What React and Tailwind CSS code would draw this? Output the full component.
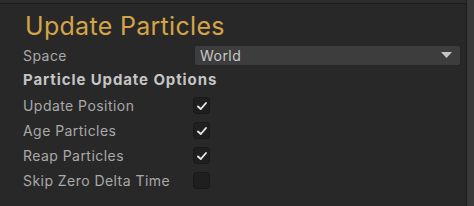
// Particle update inspector block.
function Check({ checked }) {
  return (
    <div className="w-[17px] h-[17px] rounded-[3px] bg-[#1f1f1f] border border-[#191919] grid place-items-center">
      {checked && (
        <svg width="12" height="12" viewBox="0 0 12 12" fill="none" stroke="#e6e6e6" strokeWidth="1.9" strokeLinecap="round" strokeLinejoin="round">
          <polyline points="2,6.5 4.8,9 10,3" />
        </svg>
      )}
    </div>
  );
}

function Row({ label, children, bold = false }) {
  return (
    <div className="h-[25px] flex items-center">
      <div
        className={`w-[170px] shrink-0 whitespace-nowrap ${
          bold ? 'font-bold text-[15px] tracking-[0.9px] text-[#c4c4c4]' : 'tracking-[0.45px] text-[#a9a9a9]'
        }`}
      >
        {label}
      </div>
      {children}
    </div>
  );
}

export default function App() {
  const opts = [
    ['Update Position', true],
    ['Age Particles', true],
    ['Reap Particles', true],
    ['Skip Zero Delta Time', false],
  ];
  return (
    <div
      className="w-[474px] h-[206px] flex bg-[#3a3a3a] overflow-hidden"
      style={{ fontFamily: 'Inter, "Noto Sans", sans-serif' }}
    >
      <div className="w-[467px] shrink-0 flex flex-col bg-[#282828] border-r border-[#1b1b1b]">
        <div className="h-[3px] bg-[#2c2c2c] border-b border-[#1c1c1c] box-content" />
        <div className="pl-[23px] pr-[5px]">
          <div className="h-[39px] pl-[2px] pt-[7px] text-[25px] leading-[30px] tracking-[0.3px] text-[#d4a548]">
            Update Particles
          </div>
          <div className="text-[14px]">
            <Row label="Space">
              <div className="flex-1 h-[21px] ml-[1px] rounded-[3px] bg-[#3d3d3d] border border-[#262626] flex items-center justify-between pl-[5px] pr-[8px] text-[#c9c9c9] tracking-[0.45px]">
                <span>World</span>
                <svg width="11" height="7" viewBox="0 0 11 7"><polygon points="0,0 11,0 5.5,6" fill="#c4c4c4" /></svg>
              </div>
            </Row>
            <Row label="Particle Update Options" bold />
            {opts.map(([l, c]) => (
              <Row key={l} label={l}>
                <Check checked={c} />
              </Row>
            ))}
          </div>
        </div>
      </div>
    </div>
  );
}
